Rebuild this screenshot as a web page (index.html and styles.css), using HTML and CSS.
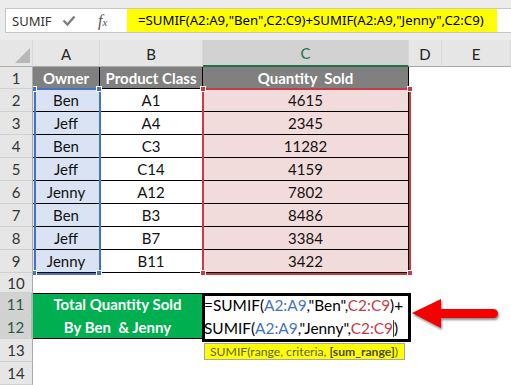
FILE: index.html
```html
<!DOCTYPE html>
<html>
<head>
<meta charset="utf-8">
<link rel="stylesheet" href="styles.css">
</head>
<body>
<div class="fbar">
  <div class="fbox">
    <div class="fleft">
      <div class="namebox">SUMIF</div>
      <svg class="check" width="14" height="11" viewBox="0 0 14 11"><path d="M1.5 5.5 L5.5 9.5 L12.5 1.5" fill="none" stroke="#7f7f7f" stroke-width="2.4"/></svg>
      <div class="fx"><i class="f">f</i><i class="x">x</i></div>
    </div>
    <div class="finput">=SUMIF(A2:A9,"Ben",C2:C9)+SUMIF(A2:A9,"Jenny",C2:C9)</div>
  </div>
</div>
<div class="sheet">
  <div class="ch corner"><svg width="33" height="27" viewBox="0 0 33 27"><polygon points="30,8 30,23 15,23" fill="#b8b8b8"/></svg></div>
  <div class="ch">A</div>
  <div class="ch">B</div>
  <div class="ch sel">C</div>
  <div class="ch">D</div>
  <div class="ch">E</div>

  <div class="rh">1</div><div class="cell hd">Owner</div><div class="cell hd">Product Class</div><div class="cell hd">Quantity&nbsp; Sold</div><div></div><div></div>
  <div class="rh">2</div><div class="cell a">Ben</div><div class="cell">A1</div><div class="cell c">4615</div><div></div><div></div>
  <div class="rh">3</div><div class="cell a">Jeff</div><div class="cell">A4</div><div class="cell c">2345</div><div></div><div></div>
  <div class="rh">4</div><div class="cell a">Ben</div><div class="cell">C3</div><div class="cell c">11282</div><div></div><div></div>
  <div class="rh">5</div><div class="cell a">Jeff</div><div class="cell">C14</div><div class="cell c">4159</div><div></div><div></div>
  <div class="rh">6</div><div class="cell a">Jenny</div><div class="cell">A12</div><div class="cell c">7802</div><div></div><div></div>
  <div class="rh">7</div><div class="cell a">Ben</div><div class="cell">B3</div><div class="cell c">8486</div><div></div><div></div>
  <div class="rh">8</div><div class="cell a">Jeff</div><div class="cell">B7</div><div class="cell c">3384</div><div></div><div></div>
  <div class="rh">9</div><div class="cell a">Jenny</div><div class="cell">B11</div><div class="cell c">3422</div><div></div><div></div>
  <div class="rh">10</div><div></div><div></div><div></div><div></div><div></div>
  <div class="rh rsel">11</div>
  <div class="tot"><span>Total Quantity Sold</span><span>By Ben&nbsp; &amp; Jenny</span></div>
  <div class="edit"><div class="etext">=SUMIF(<span class="bl">A2:A9</span>,"Ben",<span class="rd">C2:C9</span>)+<br>SUMIF(<span class="bl">A2:A9</span>,"Jenny",<span class="rd">C2:C9</span><span class="caret"></span>)</div></div>
  <div></div><div></div>
  <div class="rh rsel">12</div><div></div><div></div>
  <div class="rh">13</div><div></div><div></div><div></div><div></div><div></div>
  <div class="rh">14</div><div></div><div></div><div></div><div></div><div></div>

  <div class="selbox blue"></div>
  <div class="selbox red"></div>
  <div class="hdl bh tl"></div><div class="hdl bh tr"></div><div class="hdl bh br"></div><div class="hdl bh blh"></div>
  <div class="hdl rh2 rtl"></div><div class="hdl rh2 rtr"></div><div class="hdl rh2 rbr"></div><div class="hdl rh2 rbl"></div>

  <div class="tip">SUMIF(range, criteria, <b>[sum_range]</b>)</div>
  <svg class="arrow" width="100" height="40" viewBox="0 0 100 40"><path d="M7 18 L36 4 L36 14 L88.5 14 A4.5 4.5 0 0 1 88.5 23 L36 23 L36 33 Z" fill="#f50000"/></svg>
</div>
</body>
</html>
```

FILE: styles.css
```css
* { box-sizing: border-box; }
body {
  margin: 0;
  width: 511px;
  height: 385px;
  overflow: hidden;
  background: #fff;
  font-family: Lato, "Liberation Sans", sans-serif;
}
.fbar {
  height: 40px;
  background: #ececec;
  padding-top: 8px;
  padding-left: 5px;
}
.fbox {
  display: flex;
  height: 25px;
  background: #fff;
  border: 1px solid #c6c6c6;
  border-right: none;
}
.fleft {
  width: 121px;
  display: flex;
  align-items: center;
}
.namebox {
  width: 53px;
  padding-left: 6px;
  font-family: "Noto Sans", sans-serif;
  font-size: 13px;
  color: #333;
}
.check { margin-left: 3px; }
.fx {
  margin-left: 22px;
  font-family: "Liberation Serif", serif;
  color: #555;
}
.fx .f { font-size: 16px; }
.fx .x { font-size: 11px; }
.finput {
  width: 370px;
  height: 100%;
  background: #ffff00;
  padding-left: 11px;
  font-family: "Noto Sans", sans-serif;
  font-size: 13.2px;
  line-height: 23px;
  color: #000;
  white-space: nowrap;
  overflow: hidden;
}
.sheet {
  position: relative;
  display: grid;
  grid-template-columns: 33px 67px 103px 206px 33px 69px;
  grid-template-rows: 27px 22px repeat(8, 23px) 20px repeat(4, 23px);
  font-size: 15px;
}
.ch {
  background: #e6e6e6;
  border-right: 1px solid #d8d8d8;
  border-bottom: 1px solid #ababab;
  display: flex;
  align-items: center;
  justify-content: center;
  color: #222;
  padding-top: 1px;
}
.ch.corner { display: block; padding: 0; }
.ch.corner svg { display: block; }
.ch.sel {
  background: #d2d2d2;
  color: #217346;
  border-bottom: 2px solid #217346;
}
.rh {
  background: #e6e6e6;
  border-right: 1px solid #ababab;
  border-bottom: 1px solid #d0d0d0;
  display: flex;
  align-items: center;
  justify-content: center;
  color: #333;
}
.rh.rsel {
  background: #d2d2d2;
  color: #1f5e3b;
  border-right: 2px solid #a8b8ae;
}
.cell {
  display: flex;
  align-items: center;
  justify-content: center;
  border-right: 1px solid #000;
  border-bottom: 1px solid #000;
  color: #111;
}
.cell.hd {
  background: #808080;
  color: #fff;
  font-weight: bold;
}
.cell.a { background: #dae3f3; }
.cell.c { background: #f2dcdb; }
.tot {
  grid-column: span 2;
  grid-row: span 2;
  background: #00b050;
  border: 1px solid #000;
  border-left: none;
  color: #fff;
  font-weight: bold;
  display: flex;
  flex-direction: column;
  align-items: center;
  justify-content: center;
  line-height: 23px;
  white-space: pre;
}
.edit {
  grid-row: span 2;
  margin: 0 -2px -3px -1px;
  border: 3px solid #000;
  background: #fff;
  position: relative;
  z-index: 2;
  font-size: 15.4px;
  line-height: 23px;
  color: #000;
  white-space: nowrap;
}
.etext { margin-top: -2px; margin-left: -1px; }
.bl { color: #4472c4; }
.rd { color: #c43c45; }
.caret {
  display: inline-block;
  width: 1px;
  height: 17px;
  background: #444;
  vertical-align: -3px;
}
.selbox {
  position: absolute;
  top: 48px;
  height: 187px;
  border: 2px solid;
}
.selbox.blue { left: 34px; width: 67px; border-color: #4472c4; }
.selbox.red { left: 202px; width: 209px; border-color: #c43c45; }
.hdl {
  position: absolute;
  width: 6px;
  height: 6px;
  border: 1px solid #fff;
}
.bh { background: #4472c4; }
.rh2 { background: #c43c45; }
.tl { left: 33px; top: 46px; width: 4px; border-left: none; }
.tr { left: 96px; top: 46px; }
.br { left: 96px; top: 230px; }
.blh { left: 33px; top: 230px; width: 4px; border-left: none; }
.rtl { left: 200px; top: 46px; }
.rtr { left: 407px; top: 46px; }
.rbr { left: 407px; top: 230px; }
.rbl { left: 200px; top: 230px; }
.tip {
  position: absolute;
  left: 204px;
  top: 303px;
  width: 201px;
  height: 17px;
  background: #ffff00;
  border: 1px solid #a6a6a6;
  padding-left: 5px;
  font-family: Lato, sans-serif;
  font-size: 12.2px;
  line-height: 15px;
  color: #5e5e2a;
  white-space: nowrap;
}
.tip b { color: #4a4a1a; }
.arrow {
  position: absolute;
  left: 405px;
  top: 255px;
  filter: drop-shadow(1px 2px 1px rgba(0,0,0,0.45));
}
```
